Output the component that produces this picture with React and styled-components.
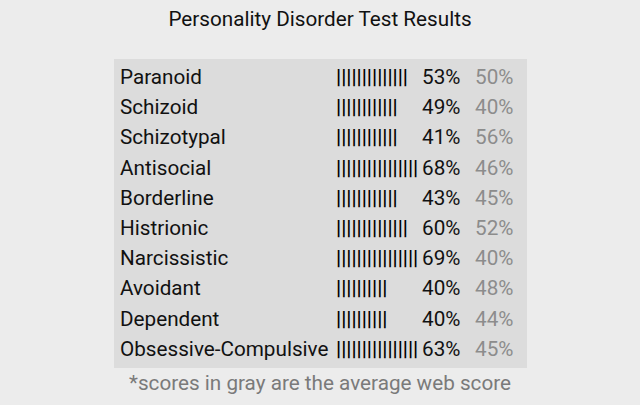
import React from "react";
import styled, { createGlobalStyle } from "styled-components";

const rows = [
  { name: "Paranoid", bars: 14, score: 53, avg: 50 },
  { name: "Schizoid", bars: 12, score: 49, avg: 40 },
  { name: "Schizotypal", bars: 12, score: 41, avg: 56 },
  { name: "Antisocial", bars: 16, score: 68, avg: 46 },
  { name: "Borderline", bars: 12, score: 43, avg: 45 },
  { name: "Histrionic", bars: 14, score: 60, avg: 52 },
  { name: "Narcissistic", bars: 16, score: 69, avg: 40 },
  { name: "Avoidant", bars: 10, score: 40, avg: 48 },
  { name: "Dependent", bars: 10, score: 40, avg: 44 },
  { name: "Obsessive-Compulsive", bars: 16, score: 63, avg: 45 },
];

const App = () => {
  return (
    <Page>
      <GlobalStyle />
      <Title>Personality Disorder Test Results</Title>
      <Results>
        {rows.map((row) => (
          <Row key={row.name}>
            <Name>{row.name}</Name>
            <Bars>{"|".repeat(row.bars)}</Bars>
            <Score>{row.score}%</Score>
            <Score muted>{row.avg}%</Score>
          </Row>
        ))}
      </Results>
      <Note>*scores in gray are the average web score</Note>
    </Page>
  );
};

export default App;

const GlobalStyle = createGlobalStyle`
  html, body {
    margin: 0;
    background: #ececec;
  }
`;

const Page = styled.div`
  width: 640px;
  height: 405px;
  display: flex;
  flex-direction: column;
  align-items: center;
  font-family: Roboto, "Liberation Sans", sans-serif;
  font-size: 20.7px;
  color: #111;
  overflow: hidden;
`;

const Title = styled.h1`
  margin: 7px 0 28px;
  font-size: 20.7px;
  font-weight: 400;
  line-height: 24px;
`;

const Results = styled.div`
  width: 413px;
  box-sizing: border-box;
  padding: 3px 0 4px 6px;
  background: #dcdcdc;
  margin-left: 1px;
`;

const Row = styled.div`
  display: grid;
  grid-template-columns: 216px 86px 53px auto;
  align-items: center;
  height: 30.2px;
`;

const Name = styled.span`
  white-space: nowrap;
`;

const Bars = styled.span`
  white-space: nowrap;
  font-weight: 500;
  color: #000;
`;

const Score = styled.span`
  color: ${(props) => (props.muted ? "#8c8c8c" : "#111")};
`;

const Note = styled.p`
  margin: 3px 0 0;
  line-height: 24px;
  color: #7a7a7a;
`;
